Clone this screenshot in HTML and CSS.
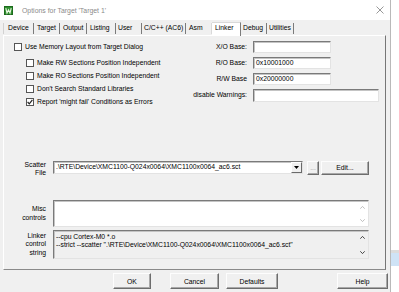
FILE: index.html
```html
<!DOCTYPE html>
<html>
<head>
<meta charset="utf-8">
<link rel="stylesheet" href="styles.css">
</head>
<body>
<div class="screen">
  <div class="window">
    <div class="titlebar">
      <svg class="app-icon" width="9" height="9" viewBox="0 0 9 9">
        <rect x="0" y="0" width="9" height="9" fill="#2f8f2f"/>
        <rect x="0.5" y="0.5" width="8" height="8" fill="none" stroke="#1d6b1d" stroke-width="1"/>
        <polyline points="1.8,2.2 3,7 4.5,3.8 6,7 7.2,2.2" fill="none" stroke="#e9f7e0" stroke-width="1.1"/>
      </svg>
      <span class="title">Options for Target 'Target 1'</span>
      <svg class="close" width="8" height="8" viewBox="0 0 8 8">
        <path d="M0.5 0.5 L7.5 7.5 M7.5 0.5 L0.5 7.5" stroke="#8c8c8c" stroke-width="0.9" fill="none"/>
      </svg>
    </div>
    <div class="client">
      <div class="tabs">
        <span class="tab tab-device">Device</span>
        <span class="tab tab-target">Target</span>
        <span class="tab tab-output">Output</span>
        <span class="tab tab-listing">Listing</span>
        <span class="tab tab-user">User</span>
        <span class="tab tab-cc">C/C++ (AC6)</span>
        <span class="tab tab-asm">Asm</span>
        <span class="tab tab-linker selected">Linker</span>
        <span class="tab tab-debug">Debug</span>
        <span class="tab tab-util">Utilities</span>
      </div>
      <div class="panel">
        <div class="top">
          <div class="checks">
            <div class="check"><span class="box"></span><span>Use Memory Layout from Target Dialog</span></div>
            <div class="check sub first-sub"><span class="box"></span><span>Make RW Sections Position Independent</span></div>
            <div class="check sub"><span class="box"></span><span>Make RO Sections Position Independent</span></div>
            <div class="check sub"><span class="box"></span><span>Don't Search Standard Libraries</span></div>
            <div class="check sub"><span class="box checked"><svg width="6" height="6" viewBox="0 0 6 6"><polyline points="0.6,3 2.3,4.8 5.4,0.8" fill="none" stroke="#222" stroke-width="1.2"/></svg></span><span>Report 'might fail' Conditions as Errors</span></div>
          </div>
          <div class="bases">
            <span class="lbl">X/O Base:</span><span class="field short"></span>
            <span class="lbl">R/O Base:</span><span class="field short">0x10001000</span>
            <span class="lbl">R/W Base</span><span class="field short">0x20000000</span>
            <span class="lbl">disable Warnings:</span><span class="field wide"></span>
          </div>
        </div>
        <div class="row row-scatter">
          <div class="rlabel">Scatter<br>File</div>
          <div class="scatter">
            <div class="combo">
              <span class="combo-text">.\RTE\Device\XMC1100-Q024x0064\XMC1100x0064_ac6.sct</span>
              <span class="drop"><svg width="5" height="3" viewBox="0 0 5 3"><polygon points="0,0 5,0 2.5,3" fill="#000"/></svg></span>
            </div>
            <span class="btn dots">...</span>
            <span class="btn edit">Edit...</span>
          </div>
        </div>
        <div class="row row-misc">
          <div class="rlabel">Misc<br>controls</div>
          <div class="area misc">
            <div class="area-text"></div>
            <div class="scroll light">
              <svg width="5" height="3" viewBox="0 0 5 3"><polyline points="0.3,2.7 2.5,0.4 4.7,2.7" fill="none" stroke="currentColor" stroke-width="0.9"/></svg>
              <svg width="5" height="3" viewBox="0 0 5 3"><polyline points="0.3,0.3 2.5,2.6 4.7,0.3" fill="none" stroke="currentColor" stroke-width="0.9"/></svg>
            </div>
          </div>
        </div>
        <div class="row row-linker">
          <div class="rlabel">Linker<br>control<br>string</div>
          <div class="area linker">
            <div class="area-text">--cpu Cortex-M0 *.o<br>--strict --scatter ".\RTE\Device\XMC1100-Q024x0064\XMC1100x0064_ac6.sct"</div>
            <div class="scroll dark">
              <svg width="5" height="3" viewBox="0 0 5 3"><polyline points="0.3,2.7 2.5,0.4 4.7,2.7" fill="none" stroke="currentColor" stroke-width="0.9"/></svg>
              <svg width="5" height="3" viewBox="0 0 5 3"><polyline points="0.3,0.3 2.5,2.6 4.7,0.3" fill="none" stroke="currentColor" stroke-width="0.9"/></svg>
            </div>
          </div>
        </div>
      </div>
      <div class="buttons">
        <span class="btn b-ok">OK</span>
        <span class="btn b-cancel">Cancel</span>
        <span class="btn b-defaults">Defaults</span>
        <span class="btn b-help">Help</span>
      </div>
    </div>
  </div>
  <div class="desk">
    <div class="desk-line"></div>
    <div class="desk-strip"></div>
  </div>
</div>
</body>
</html>
```

FILE: styles.css
```css
* { box-sizing: border-box; }
html, body { margin: 0; padding: 0; background: #fff; }
body {
  font-family: "Liberation Sans", Arial, sans-serif;
  font-size: 6.8px;
  color: #000;
}
.screen {
  display: flex;
  width: 399px;
  height: 292px;
  overflow: hidden;
  background: #fff;
}
.window {
  width: 391px;
  height: 292px;
  border-right: 1px solid #b9b9b9;
  display: flex;
  flex-direction: column;
}
.titlebar {
  height: 20px;
  background: #fff;
  display: flex;
  align-items: center;
  flex: none;
}
.app-icon { margin-left: 4px; flex: none; }
.title {
  margin-left: 9px;
  font-size: 6.9px;
  color: #8a8a8a;
}
.close { margin-left: auto; margin-right: 6px; }

.client {
  flex: 1;
  background: #f0f0f0;
  padding-top: 2px;
}

/* tabs */
.tabs {
  height: 13px;
  display: flex;
  align-items: flex-end;
  padding-left: 3px;
  position: relative;
  z-index: 1;
}
.tab {
  height: 11px;
  line-height: 10px;
  margin-bottom: 1px;
  border-right: 1px solid #7b7b7b;
  white-space: nowrap;
  flex: none;
}
.tab-device { width: 31px; padding-left: 4px; border-left: 1px solid #d2d2d2; }
.tab-target { width: 26px; padding-left: 3px; }
.tab-output { width: 27px; padding-left: 3px; }
.tab-listing { width: 29px; padding-left: 3px; }
.tab-user { width: 26px; padding-left: 2px; }
.tab-cc { width: 44px; padding-left: 2px; }
.tab-asm { width: 26px; padding-left: 3px; border-right-color: #d9d9d9; }
.tab-linker { width: 29px; padding-left: 3px; }
.tab-debug { width: 26px; padding-left: 2px; }
.tab-util { width: 27px; padding-left: 2px; }
.tab.selected {
  height: 14px;
  margin-bottom: -1px;
  background: #fff;
  border-top: 1px solid #d9d9d9;
  line-height: 9px;
  padding-top: 0;
}

/* panel */
.panel {
  margin-left: 3px;
  width: 383px;
  height: 235px;
  border-top: 1px solid #fff;
  border-left: 1px solid #fff;
  border-right: 1px solid #767676;
  border-bottom: 1px solid #8a8a8a;
  padding-top: 4px;
}
.top { display: flex; }
.checks {
  width: 184px;
  padding-left: 10px;
  flex: none;
}
.check {
  height: 13px;
  display: flex;
  align-items: center;
  white-space: nowrap;
}
.check.sub { padding-left: 12px; }
.check.first-sub { margin-top: 3px; }
.box {
  width: 8px;
  height: 8px;
  border: 1px solid #555;
  background: #fff;
  margin-right: 3px;
  flex: none;
  display: flex;
  align-items: center;
  justify-content: center;
}
.bases {
  margin-top: 1px;
  display: grid;
  grid-template-columns: 59px 126px;
  grid-auto-rows: 12px;
  column-gap: 6px;
  row-gap: 4px;
}
.lbl {
  text-align: right;
  line-height: 12px;
  white-space: nowrap;
}
.field {
  display: block;
  height: 12px;
  background: #fff;
  border: 1px solid;
  border-color: #7a7a7a #e3e3e3 #e3e3e3 #7a7a7a;
  box-shadow: inset 1px 1px 0 #c4c4c4;
  line-height: 10px;
  padding-left: 2px;
  white-space: nowrap;
}
.field.short { width: 78px; }
.field.wide { width: 126px; height: 13px; }

/* lower rows */
.row {
  display: grid;
  grid-template-columns: 42px 316px;
  column-gap: 7px;
  align-items: center;
}
.row-scatter { margin-top: 50px; }
.row-misc { margin-top: 23px; }
.row-linker { margin-top: 3px; }
.rlabel {
  text-align: right;
  line-height: 8.5px;
}
.row-scatter .rlabel { line-height: 8px; padding-top: 3px; }
.scatter {
  display: flex;
  align-items: flex-start;
  height: 14px;
}
.combo {
  width: 250px;
  height: 13px;
  background: #fff;
  border: 1px solid;
  border-color: #7a7a7a #e3e3e3 #e3e3e3 #7a7a7a;
  box-shadow: inset 1px 1px 0 #c4c4c4;
  display: flex;
  align-items: center;
  padding-left: 2px;
}
.combo-text { flex: 1; white-space: nowrap; line-height: 10px; }
.drop {
  width: 11px;
  height: 11px;
  background: #f0f0f0;
  border: 1px solid;
  border-color: #fff #6a6a6a #6a6a6a #fff;
  display: flex;
  align-items: center;
  justify-content: center;
  flex: none;
}
.btn {
  display: flex;
  align-items: center;
  justify-content: center;
  background: #f0f0f0;
  border: 1px solid;
  border-color: #fdfdfd #6d6d6d #6d6d6d #fdfdfd;
  box-shadow: inset -1px -1px 0 #a8a8a8;
  white-space: nowrap;
  flex: none;
}
.dots {
  width: 12px;
  height: 14px;
  margin-left: 4px;
  color: #9a9a9a;
  padding-bottom: 1px;
}
.edit {
  width: 48px;
  height: 14px;
  margin-left: 2px;
}
.area {
  display: flex;
  border: 1px solid;
  border-color: #7a7a7a #e3e3e3 #e3e3e3 #7a7a7a;
  box-shadow: inset 1px 1px 0 #c4c4c4;
}
.area.misc { height: 27px; background: #fff; }
.area.linker { height: 29px; background: #f0f0f0; }
.area-text {
  flex: 1;
  padding: 2px 0 0 2px;
  line-height: 8px;
  white-space: nowrap;
}
.scroll {
  width: 12px;
  display: flex;
  flex-direction: column;
  justify-content: space-between;
  align-items: center;
  padding: 5px 0 4px;
}
.scroll.light { color: #b8b8b8; }
.scroll.dark { color: #333; }
.scroll svg { display: block; }

/* dialog buttons */
.buttons {
  display: flex;
  margin-top: 3px;
  height: 16px;
}
.buttons .btn { height: 16px; }
.b-ok { width: 38px; margin-left: 113px; }
.b-cancel { width: 49px; margin-left: 19px; }
.b-defaults { width: 52px; margin-left: 7px; }
.b-help { width: 51px; margin-left: 59px; }

/* desktop behind */
.desk {
  flex: 1;
  background: #fff;
  padding-top: 250px;
}
.desk-line { height: 3px; background: #dcdcdc; }
.desk-strip { height: 13px; background: #cfe3f6; }
```
